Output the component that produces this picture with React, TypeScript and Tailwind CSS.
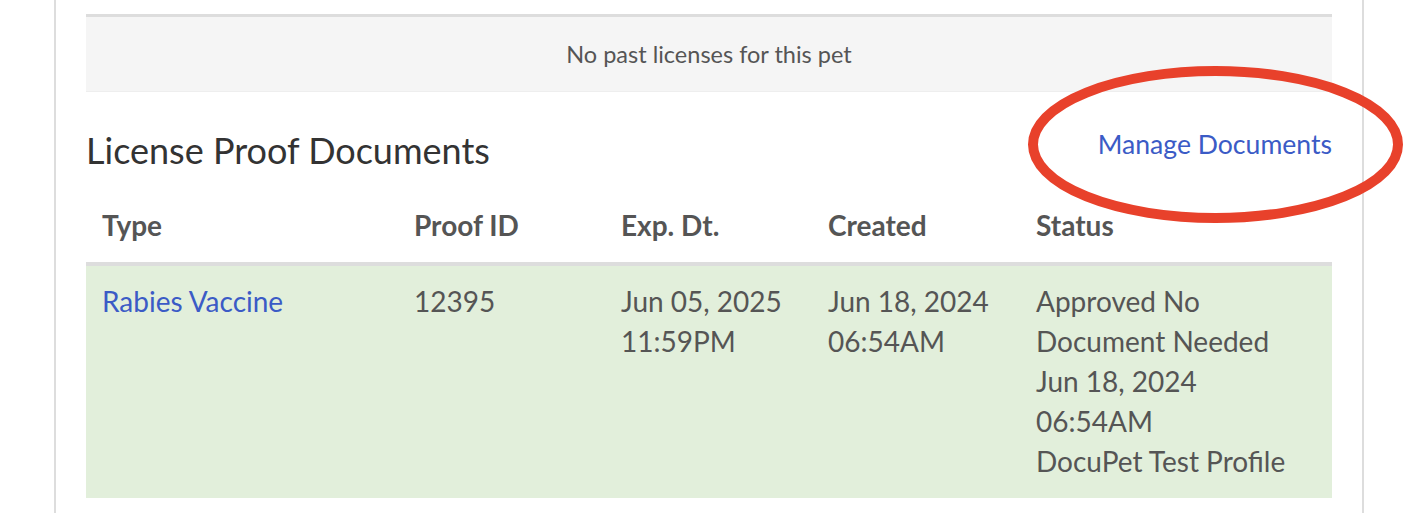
import React from "react";

export default function App() {
  const font = { fontFamily: "Lato, 'Noto Sans', sans-serif" };
  return (
    <div className="relative h-[513px] w-[1414px] overflow-hidden bg-white" style={font}>
      <div className="ml-[54px] h-full w-[1310px] border-x-2 border-[#dddddd] px-[30px] pt-[14px]">
        <div className="flex h-[78px] items-center justify-center border-t-[3px] border-b border-t-[#dddddd] border-b-[#eeeeee] bg-[#f5f5f5] pt-[2px] text-[23.5px] text-[#555555]">
          No past licenses for this pet
        </div>
        <div className="flex items-start justify-between pt-[30px]">
          <h2 className="mt-[8px] text-[36px] leading-[40px] font-normal text-[#333333]">License Proof Documents</h2>
          <a className="mt-[2px] text-[26.6px] leading-[40px] text-[#3b5bc6]">Manage Documents</a>
        </div>
        <div className="mt-[18px] grid grid-cols-[312px_207px_207px_208px_1fr] text-[28px] leading-[40px] text-[#555555]">
          <div className="border-b-4 border-[#dddddd] px-[16px] pt-[17px] pb-[17px] font-bold">Type</div>
          <div className="border-b-4 border-[#dddddd] px-[16px] pt-[17px] pb-[17px] font-bold">Proof ID</div>
          <div className="border-b-4 border-[#dddddd] px-[16px] pt-[17px] pb-[17px] font-bold">Exp. Dt.</div>
          <div className="border-b-4 border-[#dddddd] px-[16px] pt-[17px] pb-[17px] font-bold">Created</div>
          <div className="border-b-4 border-[#dddddd] px-[16px] pt-[17px] pb-[17px] font-bold">Status</div>
          <div className="bg-[#e2efdb] px-[16px] pt-[15px] pb-[17px]">
            <a className="text-[#3b5bc6]">Rabies Vaccine</a>
          </div>
          <div className="bg-[#e2efdb] px-[16px] pt-[15px] pb-[17px]">12395</div>
          <div className="bg-[#e2efdb] px-[16px] pt-[15px] pb-[17px]">
            Jun 05, 2025
            <br />
            11:59PM
          </div>
          <div className="bg-[#e2efdb] px-[16px] pt-[15px] pb-[17px]">
            Jun 18, 2024
            <br />
            06:54AM
          </div>
          <div className="bg-[#e2efdb] px-[16px] pt-[15px] pb-[17px]">
            Approved No
            <br />
            Document Needed
            <br />
            Jun 18, 2024
            <br />
            06:54AM
            <br />
            DocuPet Test Profile
          </div>
        </div>
      </div>
      <svg className="pointer-events-none absolute top-0 left-0" width="1414" height="513">
        <ellipse cx="1215.5" cy="144.5" rx="182.5" ry="73.5" fill="none" stroke="#e8412b" strokeWidth="10" />
      </svg>
    </div>
  );
}
